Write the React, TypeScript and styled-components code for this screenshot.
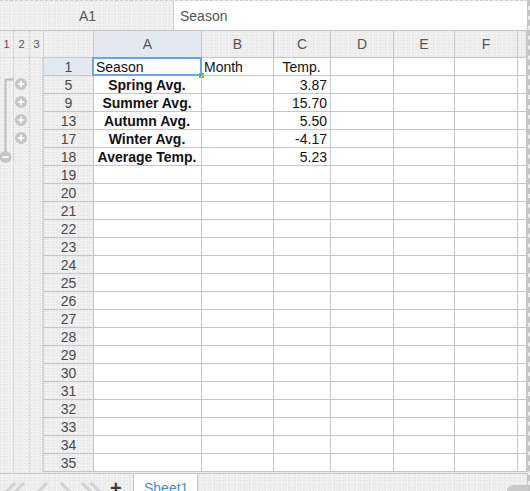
import React from "react";
import styled, { createGlobalStyle, css } from "styled-components";

const GlobalStyle = createGlobalStyle`
  html, body { margin: 0; padding: 0; background: #f0f0f0; }
  body { font-family: "Liberation Sans", Arial, sans-serif; overflow: hidden; }
  * { box-sizing: border-box; }
`;

const texture = css`
  background-color: #f0f0f0;
  background-image:
    radial-gradient(circle at 1px 1px, rgba(0,0,0,0.045) 0.6px, transparent 0.9px),
    radial-gradient(circle at 2px 3px, rgba(255,255,255,0.6) 0.6px, transparent 0.9px);
  background-size: 3px 3px, 5px 4px;
`;

const GRID = "#c7c7c7";

const Window = styled.div`
  width: 530px;
  height: 491px;
  display: flex;
  flex-direction: column;
  overflow: hidden;
  border-right: 2px dashed #c4c4c4;
  ${texture}
`;

const TopBar = styled.div`
  flex-shrink: 0;
  height: 31px;
  display: flex;
  border-top: 1px dashed #cfcfcf;
  border-bottom: 1px solid ${GRID};
  border-right: 1px solid ${GRID};
`;

const NameBox = styled.div`
  width: 174px;
  display: flex;
  align-items: center;
  justify-content: center;
  padding-left: 2px;
  font-size: 14px;
  color: #555;
  border-right: 1px solid #cfcfcf;
  ${texture}
`;

const Formula = styled.div`
  flex: 1;
  display: flex;
  align-items: center;
  padding-left: 6px;
  background: #fff;
  font-size: 14px;
  color: #555;
`;

const Body = styled.div`
  flex-shrink: 0;
  display: flex;
  border-right: 1px solid ${GRID};
`;

const Gutter = styled.div`
  width: 44px;
  display: flex;
  flex-direction: column;
  border-right: 1px solid #d2d2d2;
`;

const LevelRow = styled.div`
  height: 27px;
  display: flex;
  border-bottom: 1px dotted #cfcfcf;
`;

const LevelButton = styled.div<{ $w: number }>`
  width: ${(p) => p.$w}px;
  display: flex;
  align-items: center;
  justify-content: center;
  font-size: 11px;
  color: #555;
  border-right: 1px dotted #c4c4c4;
  &:last-child { border-right: none; }
`;

const OutlineBody = styled.div`
  height: 414px;
  display: flex;
  position: relative;
`;

const OutlineLane = styled.div<{ $w: number }>`
  width: ${(p) => p.$w}px;
  border-right: 1px dotted #c4c4c4;
  &:last-child { border-right: none; }
`;

const OutlineMarks = styled.svg`
  position: absolute;
  left: 0;
  top: 0;
`;

const Grid = styled.div`
  display: grid;
  grid-template-columns: 50px 108px 72px 57px 63px 61px 63px 9px;
  grid-template-rows: 27px;
  grid-auto-rows: 18px;
  background: #fff;
`;

const ColHeader = styled.div<{ $sel?: boolean }>`
  display: flex;
  align-items: center;
  justify-content: center;
  font-size: 14px;
  color: #555;
  border-right: 1px solid ${GRID};
  border-bottom: 1px solid ${GRID};
  ${(p) => (p.$sel ? css`background: #e3e9f1;` : texture)}
`;

const RowHeader = styled.div<{ $sel?: boolean }>`
  display: flex;
  align-items: center;
  justify-content: center;
  font-size: 14px;
  color: #4a4a4a;
  border-right: 1px solid ${GRID};
  border-bottom: 1px solid ${GRID};
  ${(p) => (p.$sel ? css`background: #e3e9f1;` : texture)}
`;

const Cell = styled.div<{ $align?: "left" | "center" | "right"; $bold?: boolean }>`
  position: relative;
  display: flex;
  align-items: center;
  justify-content: ${(p) =>
    p.$align === "right" ? "flex-end" : p.$align === "center" ? "center" : "flex-start"};
  padding: 0 3px 0 2px;
  font-size: 14px;
  font-weight: ${(p) => (p.$bold ? 700 : 400)};
  color: #111;
  white-space: nowrap;
  border-right: 1px solid ${GRID};
  border-bottom: 1px solid ${GRID};
`;

const Selection = styled.div`
  position: absolute;
  left: -2px;
  top: -1px;
  right: -1px;
  bottom: -1px;
  border: 2px solid #6ba7e8;
  pointer-events: none;
`;

const FillHandle = styled.div`
  position: absolute;
  right: -4px;
  bottom: -4px;
  width: 5px;
  height: 5px;
  background: #67b957;
`;

const TabBar = styled.div`
  flex: 1;
  min-height: 0;
  overflow: hidden;
  display: flex;
  align-items: stretch;
  margin-top: 1px;
  border-top: 1px solid ${GRID};
  border-right: 1px solid ${GRID};
  position: relative;
`;

const NavArrows = styled.svg`
  flex-shrink: 0;
  margin-top: 8px;
  display: block;
`;

const AddSheet = styled.div`
  width: 27px;
  padding: 4px 0 0 4px;
  font-size: 20px;
  line-height: 20px;
  font-weight: 700;
  color: #3c3c3c;
`;

const SheetTab = styled.div`
  width: 65px;
  padding: 6px 0 0 10px;
  background: #fff;
  border-left: 1px solid ${GRID};
  border-right: 1px solid ${GRID};
  font-size: 14px;
  line-height: 16px;
  color: #3d8fe0;
`;

const ScrollThumb = styled.div`
  position: absolute;
  right: 0;
  bottom: -4px;
  width: 20px;
  height: 10px;
  border-radius: 6px 0 0 0;
  background: #c9c9c9;
`;

type Row = {
  n: number;
  a?: string;
  b?: string;
  c?: string;
  bold?: boolean;
};

const dataRows: Row[] = [
  { n: 1, a: "Season", b: "Month", c: "Temp." },
  { n: 5, a: "Spring Avg.", c: "3.87", bold: true },
  { n: 9, a: "Summer Avg.", c: "15.70", bold: true },
  { n: 13, a: "Autumn Avg.", c: "5.50", bold: true },
  { n: 17, a: "Winter Avg.", c: "-4.17", bold: true },
  { n: 18, a: "Average Temp.", c: "5.23", bold: true },
];
const rows: Row[] = [...dataRows];
for (let i = 19; i <= 35; i++) rows.push({ n: i });

const columns = ["A", "B", "C", "D", "E", "F", ""];

const PlusCircle: React.FC<{ cx: number; cy: number }> = ({ cx, cy }) => (
  <g>
    <circle cx={cx} cy={cy} r={6} fill="#c6c6c6" />
    <path d={`M${cx - 3.2} ${cy}H${cx + 3.2}M${cx} ${cy - 3.2}V${cy + 3.2}`} stroke="#fff" strokeWidth={1.6} />
  </g>
);

export default function App() {
  return (
    <>
      <GlobalStyle />
      <Window>
        <TopBar>
          <NameBox>A1</NameBox>
          <Formula>Season</Formula>
        </TopBar>
        <Body>
          <Gutter>
            <LevelRow>
              <LevelButton $w={14}>1</LevelButton>
              <LevelButton $w={16}>2</LevelButton>
              <LevelButton $w={13}>3</LevelButton>
            </LevelRow>
            <OutlineBody>
              <OutlineLane $w={14} />
              <OutlineLane $w={16} />
              <OutlineLane $w={13} />
              <OutlineMarks width={44} height={120} viewBox="0 0 44 120">
                <path d="M5.5 99V21.5H14" stroke="#bdbdbd" strokeWidth={2} fill="none" />
                <PlusCircle cx={21} cy={26} />
                <PlusCircle cx={21} cy={44} />
                <PlusCircle cx={21} cy={62} />
                <PlusCircle cx={21} cy={80} />
                <circle cx={5.5} cy={99} r={6} fill="#c6c6c6" />
                <path d="M2.3 99H8.7" stroke="#fff" strokeWidth={1.6} />
              </OutlineMarks>
            </OutlineBody>
          </Gutter>
          <Grid>
            <ColHeader />
            {columns.map((c, i) => (
              <ColHeader key={i} $sel={c === "A"}>
                {c}
              </ColHeader>
            ))}
            {rows.map((r) => (
              <React.Fragment key={r.n}>
                <RowHeader $sel={r.n === 1}>{r.n}</RowHeader>
                <Cell $align={r.n === 1 ? "left" : "center"} $bold={r.bold}>
                  {r.a}
                  {r.n === 1 && (
                    <Selection>
                      <FillHandle />
                    </Selection>
                  )}
                </Cell>
                <Cell>{r.b}</Cell>
                <Cell $align={r.n === 1 ? "center" : "right"}>{r.c}</Cell>
                <Cell />
                <Cell />
                <Cell />
                <Cell />
              </React.Fragment>
            ))}
          </Grid>
        </Body>
        <TabBar>
          <NavArrows width={106} height={20} viewBox="0 0 106 20">
            <g stroke="#d2d2d2" strokeWidth={3} fill="none" strokeLinecap="square">
              <path d="M14 2L6 10L14 18M23 2L15 10L23 18" />
              <path d="M46 2L38 10L46 18" />
              <path d="M62 2L70 10L62 18" />
              <path d="M83 2L91 10L83 18M92 2L100 10L92 18" />
            </g>
          </NavArrows>
          <AddSheet>+</AddSheet>
          <SheetTab>Sheet1</SheetTab>
          <ScrollThumb />
        </TabBar>
      </Window>
    </>
  );
}
